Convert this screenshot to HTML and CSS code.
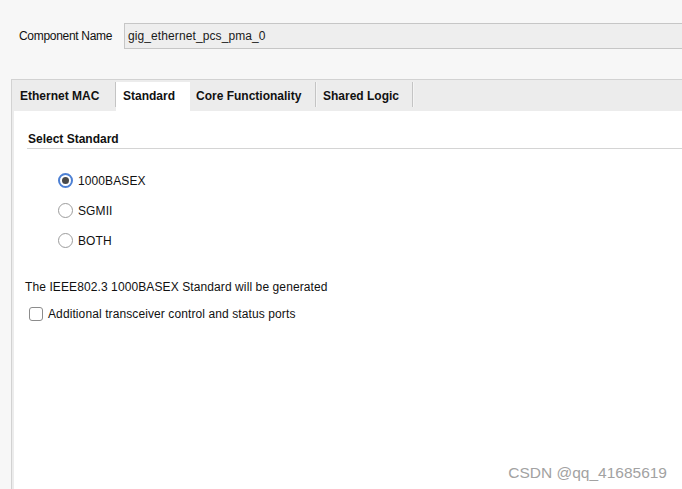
FILE: index.html
```html
<!DOCTYPE html>
<html>
<head>
<meta charset="utf-8">
<link rel="stylesheet" href="styles.css">
</head>
<body>
<div class="header">
  <span class="label">Component Name</span>
  <div class="field">gig_ethernet_pcs_pma_0</div>
</div>
<div class="panel">
  <div class="tabs">
    <div class="tab tab-mac">Ethernet MAC</div>
    <div class="tab tab-std active">Standard</div>
    <div class="tab tab-core">Core Functionality</div>
    <div class="tab tab-shared">Shared Logic</div>
  </div>
  <div class="content">
    <div class="section-title">Select Standard</div>
    <div class="radios">
      <div class="radio-row"><span class="radio checked"></span><span>1000BASEX</span></div>
      <div class="radio-row"><span class="radio"></span><span>SGMII</span></div>
      <div class="radio-row"><span class="radio"></span><span>BOTH</span></div>
    </div>
    <div class="note">The IEEE802.3 1000BASEX Standard will be generated</div>
    <div class="check-row"><span class="checkbox"></span><span>Additional transceiver control and status ports</span></div>
    <div class="watermark">CSDN @qq_41685619</div>
  </div>
</div>
</body>
</html>
```

FILE: styles.css
```css
html, body {
  margin: 0;
  padding: 0;
  height: 489px;
  overflow: hidden;
  background: #f7f7f7;
  font-family: "Liberation Sans", Arial, sans-serif;
  font-size: 12px;
  color: #111;
}

.header {
  display: flex;
  align-items: center;
  height: 79px;
  box-sizing: border-box;
  padding: 23px 0 30px 19px;
}

.label {
  letter-spacing: -0.3px;
  width: 105px;
}

.field {
  flex: 1;
  height: 26px;
  box-sizing: border-box;
  border: 1px solid #c6c6c6;
  border-right: none;
  background: #eeeeee;
  display: flex;
  align-items: center;
  padding-left: 3px;
  letter-spacing: 0.1px;
  color: #1a1a1a;
}

.panel {
  margin-left: 11px;
  height: 410px;
  border-top: 1px solid #d2d2d2;
  border-left: 1px solid #d2d2d2;
  background: #ececec;
  padding: 2px 0 0 2px;
  display: flex;
  flex-direction: column;
}

.tabs {
  display: flex;
  height: 29px;
}

.tab {
  font-weight: bold;
  display: flex;
  align-items: center;
  padding-left: 6px;
  padding-bottom: 2px;
  box-sizing: border-box;
  position: relative;
  color: #111;
}

.tab-mac { width: 102px; }
.tab-std { width: 74px; padding-left: 7px; }
.tab-core { width: 126px; }
.tab-shared { width: 97px; padding-left: 7px; }

.tab-mac::after,
.tab-core::after,
.tab-shared::after {
  content: "";
  position: absolute;
  right: 0;
  top: 0;
  bottom: 4px;
  width: 1px;
  background: #c4c4c4;
  box-shadow: 1px 0 0 #f4f4f4;
}

.tab.active {
  background: #ffffff;
}

.content {
  flex: 1;
  background: #ffffff;
  position: relative;
  display: flex;
  flex-direction: column;
}

.section-title {
  font-weight: bold;
  margin: 21px 0 0 13px;
  padding: 0 0 2px 1px;
  border-bottom: 1px solid #d4d4d4;
  line-height: 14px;
}

.radios {
  display: flex;
  flex-direction: column;
  gap: 15px;
  margin: 24px 0 0 44px;
}

.radio-row {
  display: flex;
  align-items: center;
  gap: 5px;
  height: 15px;
  letter-spacing: 0.1px;
}

.radio {
  width: 15px;
  height: 15px;
  box-sizing: border-box;
  border-radius: 50%;
  border: 1px solid #9c9c9c;
  background: #ffffff;
  position: relative;
}

.radio.checked {
  border: 2px solid #4d80d4;
}

.radio.checked::after {
  content: "";
  position: absolute;
  left: 50%;
  top: 50%;
  width: 7px;
  height: 7px;
  margin: -3.5px 0 0 -3.5px;
  border-radius: 50%;
  background: #4a4a4a;
}

.note {
  margin: 32px 0 0 11px;
  letter-spacing: 0.1px;
  line-height: 14px;
}

.check-row {
  display: flex;
  align-items: center;
  gap: 5px;
  margin: 13px 0 0 15px;
  letter-spacing: 0.1px;
}

.checkbox {
  width: 14px;
  height: 14px;
  box-sizing: border-box;
  border: 1px solid #8c8c8c;
  border-radius: 3px;
  background: #ffffff;
}

.watermark {
  position: absolute;
  right: 15px;
  bottom: 10px;
  font-size: 15.5px;
  color: #a2a2a2;
}
```
